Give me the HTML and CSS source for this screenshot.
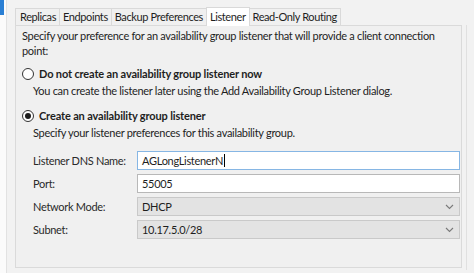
FILE: index.html
```html
<!DOCTYPE html>
<html lang="en">
<head>
  <meta charset="UTF-8" />
  <title>Availability Group Listener</title>
  <link rel="stylesheet" href="styles.css">
</head>
<body>
  <div class="page">
    <!-- left strip with the selected node marker -->
    <div class="side"><div class="sel"></div></div>

    <div class="pane">
      <div class="tabs">
        <div class="tab">Replicas</div>
        <div class="tab">Endpoints</div>
        <div class="tab">Backup Preferences</div>
        <div class="tab active">Listener</div>
        <div class="tab">Read-Only Routing</div>
      </div>

      <div class="panel">
        <p class="intro">Specify your preference for an availability group listener that will provide a client connection point:</p>

        <div class="option">
          <span class="radio"></span>
          <span class="opt-label">Do not create an availability group listener now</span>
        </div>
        <p class="hint">You can create the listener later using the Add Availability Group Listener dialog.</p>

        <div class="option second">
          <span class="radio checked"></span>
          <span class="opt-label">Create an availability group listener</span>
        </div>
        <p class="hint">Specify your listener preferences for this availability group.</p>

        <div class="form">
          <div class="row">
            <span class="label">Listener DNS Name:</span>
            <div class="field focus">AGLongListenerN<span class="caret"></span></div>
          </div>
          <div class="row">
            <span class="label">Port:</span>
            <div class="field">55005</div>
          </div>
          <div class="row">
            <span class="label">Network Mode:</span>
            <div class="field combo">DHCP
              <svg class="chev" width="9" height="6" viewBox="0 0 9 6"><path d="M1 1l3.5 3.5L8 1" fill="none" stroke="#7a7a7a" stroke-width="1.1"/></svg>
            </div>
          </div>
          <div class="row">
            <span class="label">Subnet:</span>
            <div class="field combo">10.17.5.0/28
              <svg class="chev" width="9" height="6" viewBox="0 0 9 6"><path d="M1 1l3.5 3.5L8 1" fill="none" stroke="#7a7a7a" stroke-width="1.1"/></svg>
            </div>
          </div>
        </div>
      </div>
    </div>

    <div class="edge"></div>
  </div>
</body>
</html>
```

FILE: styles.css
```css
/* ----- Reset & Basic Setup ----- */
* {
  margin: 0;
  padding: 0;
  box-sizing: border-box;
}

html, body {
  width: 100%;
  height: 100%;
  overflow: hidden;
  background: #f2f2f2;
  font-family: Lato, "Open Sans", sans-serif;
  font-size: 11px;
  letter-spacing: -0.3px;
  color: #1e1e1e;
}

.page {
  display: flex;
  height: 273px;
}

/* left strip */
.side {
  width: 7px;
  background: #fbfbfb;
  border-right: 1px solid #e2e2e2;
}
.sel {
  width: 4px;
  height: 15px;
  background: #2a7fd4;
}

/* ----- Tab strip and page ----- */
.pane {
  width: 455px;
  padding: 8px 0 0 8px;
}
.tabs {
  display: flex;
  height: 17px;
  position: relative;
  z-index: 1;
}
.tab {
  padding: 0 3px;
  height: 17px;
  line-height: 16px;
  letter-spacing: -0.4px;
  background: #f0f0f0;
  border: 1px solid #d9d9d9;
  border-bottom: none;
  margin-right: -1px;
  white-space: nowrap;
}
.tab:first-child {
  padding-left: 4px;
}
.tab.active {
  background: #fff;
  height: 19px;
  margin-top: -1px;
  padding-top: 1px;
  border-color: #d9d9d9;
}

.panel {
  height: 243px;
  background: #f0f0f0;
  border: 1px solid #dadada;
  padding: 2px 0 0 6px;
}

.intro {
  line-height: 15px;
  padding-right: 6px;
}

.option {
  display: flex;
  align-items: center;
  gap: 5px;
  margin-top: 8px;
  height: 15px;
}
.option.second {
  margin-top: 10px;
}
.radio {
  width: 12px;
  height: 12px;
  border: 1px solid #333;
  border-radius: 50%;
  background: #fff;
  display: flex;
  align-items: center;
  justify-content: center;
}
.radio.checked::after {
  content: "";
  width: 6px;
  height: 6px;
  border-radius: 50%;
  background: #1e1e1e;
}
.opt-label {
  font-weight: bold;
  letter-spacing: -0.15px;
}
.hint {
  margin-top: 2px;
  padding-left: 11px;
  line-height: 15px;
}

/* ----- Listener form ----- */
.form {
  margin-top: 11px;
  display: flex;
  flex-direction: column;
  gap: 4px;
  padding-left: 11px;
}
.row {
  display: flex;
  align-items: center;
}
.label {
  width: 104px;
  color: #2a2a2a;
}
.field {
  width: 323px;
  height: 19px;
  border: 1px solid #b8b8b8;
  background: #fff;
  padding-left: 4px;
  line-height: 17px;
  display: flex;
  align-items: center;
}
.field.focus {
  border-color: #86b6e4;
}
.caret {
  width: 1px;
  height: 13px;
  background: #000;
  margin-left: 1px;
}
.field.combo {
  background: #e3e3e3;
  border-color: #c9c9c9;
  justify-content: space-between;
  padding-right: 5px;
}

.edge {
  width: 5px;
  border-right: 1px solid #e0e0e0;
  margin-top: 25px;
  height: 245px;
}
```
